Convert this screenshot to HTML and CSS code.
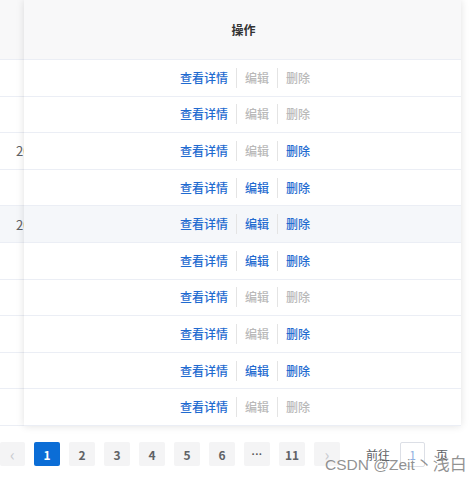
FILE: index.html
```html
<!DOCTYPE html>
<html lang="zh-CN">
<head>
  <meta charset="UTF-8">
  <meta name="viewport" content="width=device-width, initial-scale=1.0">
  <title>列表</title>
  <link rel="stylesheet" href="styles.css">
</head>
<body>

<div class="page">
  <div class="table">
    <div class="scroll-col">
      <div class="th"></div>
      <div class="td"></div>
      <div class="td"></div>
      <div class="td"><span class="date">2023-03-01</span></div>
      <div class="td"></div>
      <div class="td hover"><span class="date">2023-03-01</span></div>
      <div class="td"></div>
      <div class="td"></div>
      <div class="td"></div>
      <div class="td"></div>
      <div class="td"></div>
    </div>

    <div class="fixed-col">
      <div class="th">操作</div>
      <div class="td"><div class="ops"><a class="op">查看详情</a><a class="op off">编辑</a><a class="op off">删除</a></div></div>
      <div class="td"><div class="ops"><a class="op">查看详情</a><a class="op off">编辑</a><a class="op off">删除</a></div></div>
      <div class="td"><div class="ops"><a class="op">查看详情</a><a class="op off">编辑</a><a class="op">删除</a></div></div>
      <div class="td"><div class="ops"><a class="op">查看详情</a><a class="op">编辑</a><a class="op">删除</a></div></div>
      <div class="td hover"><div class="ops"><a class="op">查看详情</a><a class="op">编辑</a><a class="op">删除</a></div></div>
      <div class="td"><div class="ops"><a class="op">查看详情</a><a class="op">编辑</a><a class="op">删除</a></div></div>
      <div class="td"><div class="ops"><a class="op">查看详情</a><a class="op off">编辑</a><a class="op off">删除</a></div></div>
      <div class="td"><div class="ops"><a class="op">查看详情</a><a class="op off">编辑</a><a class="op">删除</a></div></div>
      <div class="td"><div class="ops"><a class="op">查看详情</a><a class="op">编辑</a><a class="op">删除</a></div></div>
      <div class="td"><div class="ops"><a class="op">查看详情</a><a class="op off">编辑</a><a class="op off">删除</a></div></div>
    </div>
  </div>

  <div class="pager">
    <button class="btn prev" disabled>&lsaquo;</button>
    <ul class="pages">
      <li class="btn active">1</li>
      <li class="btn">2</li>
      <li class="btn">3</li>
      <li class="btn">4</li>
      <li class="btn">5</li>
      <li class="btn">6</li>
      <li class="btn more">&bull;&bull;&bull;</li>
      <li class="btn">11</li>
    </ul>
    <button class="btn next">&rsaquo;</button>
    <span class="jump">前往 <input class="jump-input" value="1"> 页</span>
  </div>

  <div class="watermark">CSDN @Zeit<span class="wm-cjk">丶浅白</span></div>
</div>

</body>
</html>
```

FILE: styles.css
```css
body {
  margin: 0;
  padding: 0;
  background-color: #fff;
  font-family: "Noto Sans CJK SC", "Noto Sans", sans-serif;
  font-size: 12px;
  color: #606266;
}
.page {
  position: relative;
  width: 474px;
  height: 481px;
  overflow: hidden;
}
.table {
  display: flex;
  width: 463px;
}
.scroll-col {
  width: 24px;
  overflow: hidden;
}
.fixed-col {
  width: 437px;
  box-shadow: 0 0 8px rgba(0, 0, 0, 0.12);
  position: relative;
  z-index: 1;
}
.th {
  height: 60px;
  box-sizing: border-box;
  border-bottom: 1px solid #ebeef5;
  background-color: #f8f8f9;
  display: flex;
  align-items: center;
  justify-content: center;
  font-weight: bold;
  color: #333;
}
.fixed-col .th {
  padding-left: 2px;
}
.td {
  height: 36.6px;
  box-sizing: border-box;
  border-bottom: 1px solid #ebeef5;
  background-color: #fff;
  display: flex;
  align-items: center;
  justify-content: center;
}
.td.hover {
  background-color: #f5f7fa;
}
.scroll-col .td {
  justify-content: flex-start;
  padding-left: 16px;
  white-space: nowrap;
  color: #606266;
  font-size: 13px;
}
.ops {
  display: flex;
  align-items: center;
  margin-left: 5px;
}
.op {
  color: #1f6bd0;
  font-weight: 500;
  padding: 0 8px;
  line-height: 20px;
  cursor: pointer;
}
.op:first-child {
  padding-left: 0;
}
.op:last-child {
  padding-right: 0;
}
.op + .op {
  border-left: 1px solid #e4e4e4;
}
.op.off {
  color: #b9b9b9;
  cursor: default;
}
.pager {
  display: flex;
  align-items: center;
  margin-top: 16px;
  height: 25px;
}
.pages {
  display: flex;
  gap: 9px;
  list-style: none;
  margin: 0 9px;
  padding: 0;
}
.btn {
  width: 26px;
  height: 24px;
  border: none;
  border-radius: 2px;
  background-color: #f4f4f5;
  color: #606266;
  font-family: inherit;
  font-size: 12px;
  font-weight: bold;
  display: flex;
  align-items: center;
  justify-content: center;
  padding: 0;
}
.btn.prev {
  width: 25px;
  color: #c8cacf;
  font-size: 16px;
  font-weight: normal;
}
.btn.next {
  color: #c8cacf;
  font-size: 16px;
  font-weight: normal;
}
.btn.active {
  background-color: #0b6dd6;
  color: #fff;
}
.btn.more {
  font-family: "DejaVu Sans", sans-serif;
  font-size: 5px;
  letter-spacing: 0.5px;
  color: #555;
}
.jump {
  margin-left: 26px;
  display: flex;
  align-items: center;
  color: #606266;
}
.jump-input {
  width: 25px;
  height: 25px;
  box-sizing: border-box;
  margin: 0 11px 0 10px;
  border: 1px solid #dcdfe6;
  border-radius: 2px;
  text-align: center;
  color: #8fb0e0;
  font-family: inherit;
  font-size: 12px;
  padding: 0;
}
.watermark {
  position: absolute;
  left: 325px;
  top: 450px;
  font-family: "Liberation Sans", "Noto Sans CJK SC", sans-serif;
  font-size: 15.5px;
  color: rgba(110, 110, 110, 0.75);
  white-space: nowrap;
  z-index: 2;
}
.wm-cjk {
  font-family: "Noto Sans CJK SC", sans-serif;
  font-size: 17px;
  margin-left: 1px;
}
```
